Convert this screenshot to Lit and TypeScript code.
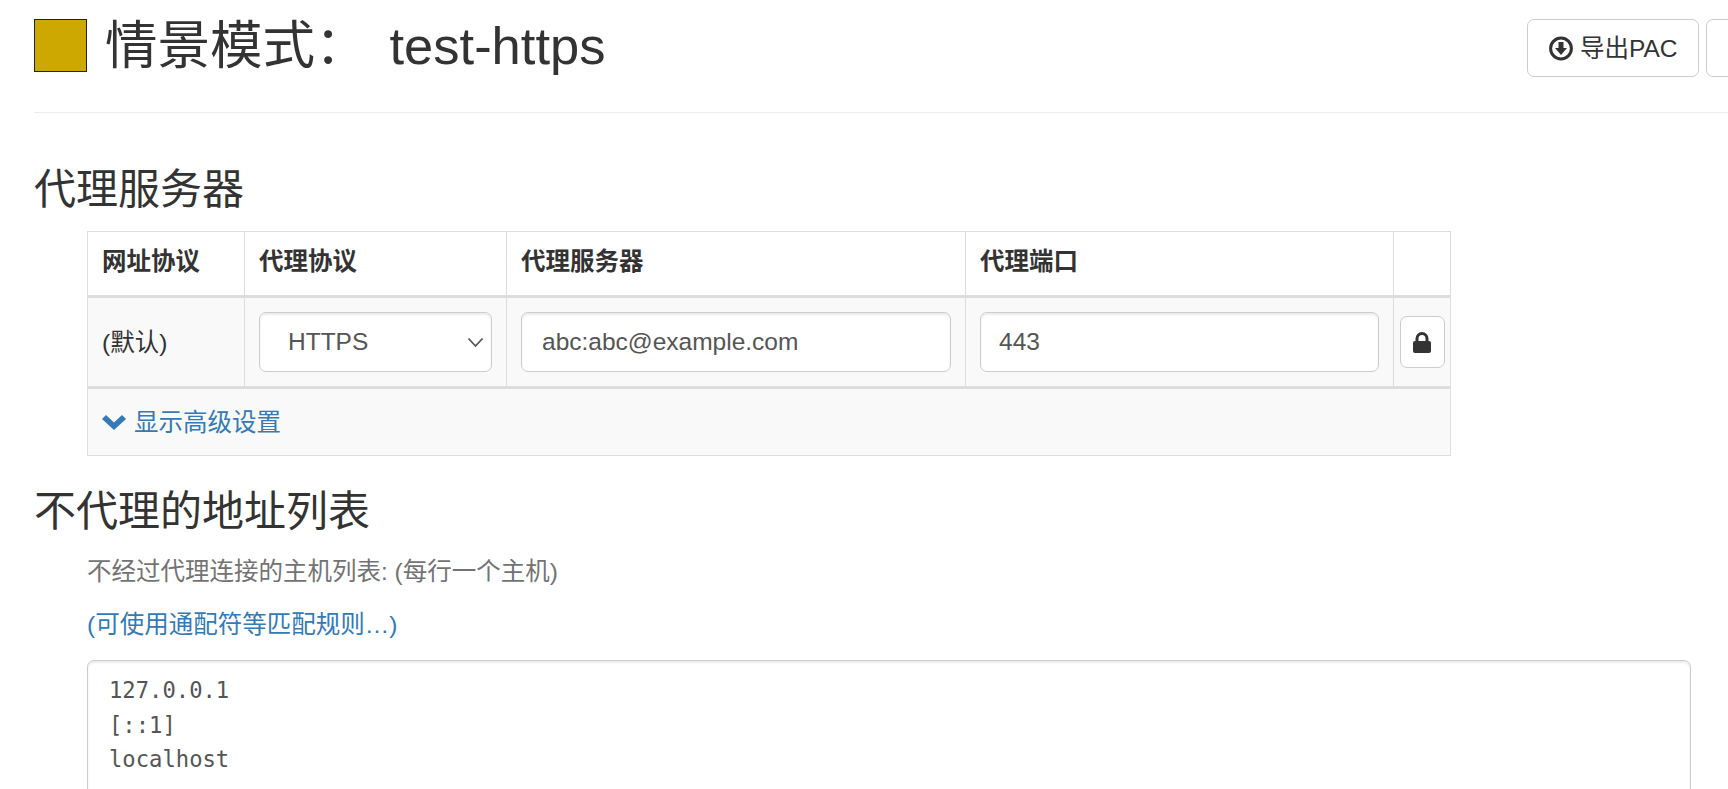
// app.ts
import { LitElement, html, css } from 'lit';
import { customElement } from 'lit/decorators.js';

@customElement('app-root')
export class AppRoot extends LitElement {
  static styles = css`
    :host {
      display: block;
      width: 1728px;
      height: 789px;
      overflow: hidden;
      background: #fff;
      color: #333;
      font-family: "Liberation Sans", "Noto Sans CJK SC", sans-serif;
      font-size: 24.5px;
      line-height: 35px;
    }

    .page {
      padding-left: 34px;
      display: flex;
      flex-direction: column;
    }

    .page-header {
      height: 112px;
      border-bottom: 1px solid #eee;
      display: flex;
      justify-content: space-between;
      align-items: flex-start;
    }

    h1 {
      margin: 0;
      display: flex;
      align-items: center;
      gap: 18px;
      padding-top: 19px;
      font-size: 52.5px;
      font-weight: 400;
      line-height: 53px;
    }

    .swatch {
      width: 53px;
      height: 53px;
      box-sizing: border-box;
      border: 1px solid #222;
      background: #cca800;
    }

    .title-name {
      margin-left: 22px;
    }

    .actions {
      display: flex;
      gap: 7px;
      width: 201px;
      flex: none;
      padding-top: 19px;
      overflow: hidden;
    }

    .btn {
      flex: none;
      box-sizing: border-box;
      height: 58px;
      border: 1px solid #ccc;
      border-radius: 7px;
      background: #fff;
      color: #333;
      font: inherit;
      display: flex;
      align-items: center;
      padding: 0;
    }

    .btn-export {
      width: 172px;
      padding-left: 21px;
      gap: 7px;
    }

    .btn-next {
      width: 60px;
    }

    h3 {
      margin: 54px 0 18px;
      font-size: 42px;
      font-weight: 400;
      line-height: 46px;
    }

    h3.second {
      margin-top: 33px;
      margin-bottom: 0;
    }

    .indent {
      margin-left: 53px;
    }

    table {
      width: 1363px;
      border-collapse: collapse;
      table-layout: fixed;
    }

    th, td {
      border: 1px solid #ddd;
      padding: 14px;
      text-align: left;
    }

    th {
      font-weight: 700;
      height: 35px;
      padding-top: 12px;
      padding-bottom: 16px;
    }

    thead th {
      border-bottom: 3px solid #ddd;
    }

    tbody tr.rule td {
      background: #f9f9f9;
      border-bottom: 3px solid #ddd;
      height: 60px;
    }

    tbody tr.more td {
      background: #f9f9f9;
      height: 38px;
    }

    .cell-lock {
      padding: 0 5px;
    }

    .select-wrap {
      position: relative;
      display: block;
    }

    .select-wrap svg {
      position: absolute;
      right: 8px;
      top: 25px;
      pointer-events: none;
    }

    select, input, textarea {
      display: block;
      width: 100%;
      box-sizing: border-box;
      border: 1px solid #ccc;
      border-radius: 7px;
      background: #fff;
      color: #555;
      font-family: inherit;
      font-size: 24.5px;
      box-shadow: inset 0 2px 2px rgba(0, 0, 0, .075);
      outline: none;
    }

    select, input {
      height: 60px;
      padding: 0 18px;
      margin-top: -1px;
    }

    select {
      appearance: none;
      padding-left: 28px;
    }

    input.host {
      padding-left: 20px;
    }

    .btn-lock {
      width: 45px;
      height: 52px;
      margin: 0 auto;
      justify-content: center;
    }

    a {
      color: #337ab7;
      text-decoration: none;
    }

    .more-link {
      display: inline-flex;
      align-items: center;
      gap: 8px;
    }

    .help {
      margin: 19px 0 0 53px;
      color: #737373;
    }

    .wildcards {
      margin: 18px 0 18px 53px;
    }

    textarea {
      width: 1604px;
      height: 300px;
      margin-left: 53px;
      padding: 12px 21px;
      font-family: "DejaVu Sans Mono", monospace;
      font-size: 22.2px;
      line-height: 34.5px;
      resize: none;
    }
  `;

  render() {
    return html`
      <div class="page">
        <div class="page-header">
          <h1>
            <span class="swatch"></span>
            <span>情景模式：<span class="title-name">test-https</span></span>
          </h1>
          <div class="actions">
            <button class="btn btn-export">
              <svg width="24" height="25" viewBox="0 0 24 25">
                <circle cx="12" cy="12.5" r="10.4" fill="none" stroke="#333" stroke-width="3"></circle>
                <path d="M9.5 6h5v6h3.5l-6 7-6-7h3.5z" fill="#333"></path>
              </svg>
              <span>导出PAC</span>
            </button>
            <button class="btn btn-next"></button>
          </div>
        </div>

        <h3>代理服务器</h3>
        <table class="indent">
          <colgroup>
            <col style="width: 157px" />
            <col style="width: 262px" />
            <col style="width: 459px" />
            <col style="width: 428px" />
            <col style="width: 57px" />
          </colgroup>
          <thead>
            <tr>
              <th>网址协议</th>
              <th>代理协议</th>
              <th>代理服务器</th>
              <th>代理端口</th>
              <th></th>
            </tr>
          </thead>
          <tbody>
            <tr class="rule">
              <td>(默认)</td>
              <td>
                <span class="select-wrap">
                  <select>
                    <option>HTTPS</option>
                  </select>
                  <svg width="17" height="11" viewBox="0 0 17 11">
                    <path d="M1.5 1.5l7 7.5 7-7.5" fill="none" stroke="#555" stroke-width="1.8"></path>
                  </svg>
                </span>
              </td>
              <td><input class="host" type="text" .value=${'abc:abc@example.com'} /></td>
              <td><input type="text" .value=${'443'} /></td>
              <td class="cell-lock">
                <button class="btn btn-lock">
                  <svg width="18" height="21" viewBox="0 0 18 21">
                    <path d="M4 10V6.5a5 5 0 0 1 10 0V10" fill="none" stroke="#333" stroke-width="3"></path>
                    <rect x="0" y="9" width="18" height="12" rx="2" fill="#333"></rect>
                  </svg>
                </button>
              </td>
            </tr>
            <tr class="more">
              <td colspan="5">
                <a class="more-link" href="#">
                  <svg width="24" height="15" viewBox="0 0 24 15">
                    <path d="M0 4l4-4 8 7.5L20 0l4 4-12 11z" fill="#337ab7"></path>
                  </svg>
                  <span>显示高级设置</span>
                </a>
              </td>
            </tr>
          </tbody>
        </table>

        <h3 class="second">不代理的地址列表</h3>
        <div class="help">不经过代理连接的主机列表: (每行一个主机)</div>
        <div class="wildcards"><a href="#">(可使用通配符等匹配规则…)</a></div>
        <textarea .value=${'127.0.0.1\n[::1]\nlocalhost'}></textarea>
      </div>
    `;
  }
}
